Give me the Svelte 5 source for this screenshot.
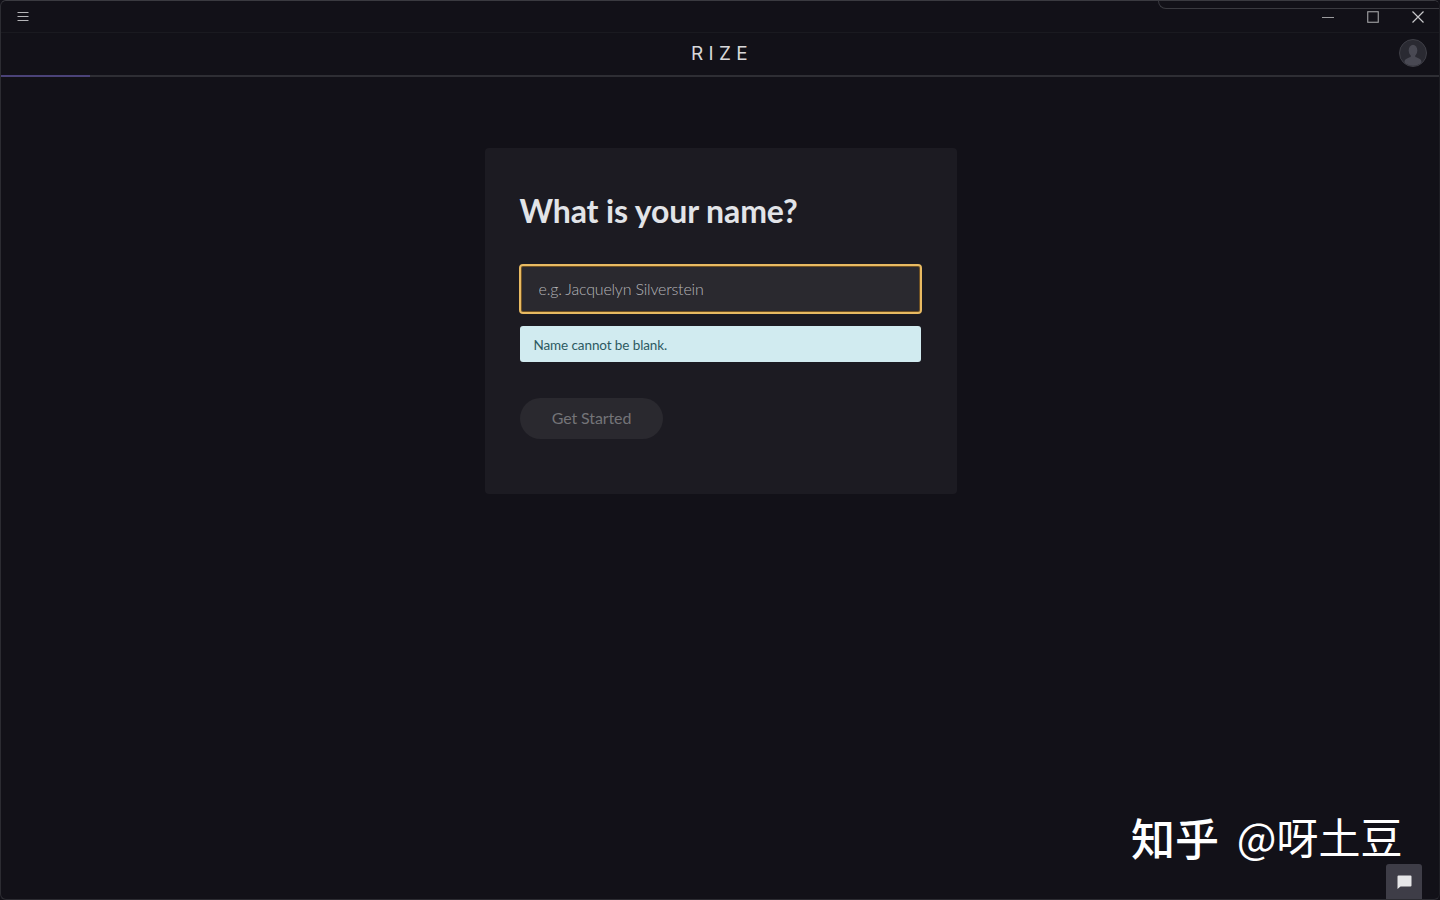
<script>
  let name = $state('');
</script>

<div class="window">
  <div class="notch"></div>
  <div class="titlebar">
    <button class="menu" aria-label="Menu">
      <svg width="12" height="12" viewBox="0 0 12 12"><path d="M0.5 1.5h11M0.5 5.5h11M0.5 9.5h11" stroke="#b5b5b8" stroke-width="1.2" fill="none"/></svg>
    </button>
    <div class="controls">
      <svg width="12" height="12" viewBox="0 0 12 12"><path d="M0 6.500h12" stroke="#9b9b9e" stroke-width="1.2"/></svg>
      <svg width="12" height="12" viewBox="0 0 12 12"><rect x="0.75" y="0.75" width="10.5" height="10.5" stroke="#a5a5a8" stroke-width="1.1" fill="none"/></svg>
      <svg width="12" height="12" viewBox="0 0 12 12"><path d="M0.5 0.5l11 11M11.5 0.5l-11 11" stroke="#c8c8ca" stroke-width="1.2" fill="none"/></svg>
    </div>
  </div>

  <header class="header">
    <div class="logo">RIZE</div>
    <div class="avatar">
      <svg width="28" height="28" viewBox="0 0 28 28">
        <circle cx="14" cy="14" r="13.500" fill="#2a2a32" stroke="#3f3f47" stroke-width="1"/>
        <clipPath id="av"><circle cx="14" cy="14" r="12.800"/></clipPath>
        <g clip-path="url(#av)" fill="#494953">
          <ellipse cx="14" cy="11.500" rx="4.300" ry="5.800"/>
          <path d="M11.700 15.500h4.600v2.400c2.600 1 6.200 1.800 6.200 5V28h-17v-5.100c0-3.200 3.600-4 6.200-5z"/>
        </g>
      </svg>
    </div>
  </header>
  <div class="progress"><div class="bar"></div></div>

  <main class="main">
    <section class="card">
      <h1>What is your name?</h1>
      <input class="field" type="text" placeholder="e.g. Jacquelyn Silverstein" bind:value={name} />
      <div class="alert">Name cannot be blank.</div>
      <button class="start" disabled>Get Started</button>
    </section>
  </main>

  <div class="watermark"><span class="zh">知乎</span> <span class="at">@呀土豆</span></div>
  <button class="chat" aria-label="Chat">
    <svg width="15" height="14" viewBox="0 0 15 14"><path d="M1.500 0.500h12a1 1 0 0 1 1 1v9a1 1 0 0 1-1 1H3.500L.5 14V1.500a1 1 0 0 1 1-1z" fill="#e6e6e8"/></svg>
  </button>
</div>

<style>
  :global(body) {
    margin: 0;
    background: #121118;
  }
  .window {
    position: relative;
    width: 1440px;
    height: 900px;
    box-sizing: border-box;
    overflow: hidden;
    background: #121118;
    border-top: 1px solid #3a3a40;
    border-left: 1px solid #2c2c32;
    border-right: 1px solid #1e1e24;
    border-bottom: 1px solid #2c2c32;
    border-radius: 6px;
    display: flex;
    flex-direction: column;
    font-family: Lato, "Noto Sans", sans-serif;
  }
  .notch {
    position: absolute;
    top: -1px;
    left: 1157px;
    right: 0;
    height: 9px;
    background: #121118;
    border-left: 1px solid #3a3a40;
    border-bottom: 1px solid #3a3a40;
    border-bottom-left-radius: 8px;
    box-sizing: border-box;
  }
  .titlebar {
    height: 32px;
    flex: none;
    display: flex;
    align-items: center;
    justify-content: space-between;
    padding: 0 15px 0 16px;
    box-sizing: border-box;
    border-bottom: 1px solid #1a1a20;
  }
  .menu {
    background: none;
    border: 0;
    padding: 0;
    display: flex;
  }
  .controls {
    display: flex;
    gap: 33px;
    align-items: center;
    padding-top: 1px;
  }
  .header {
    height: 42px;
    flex: none;
    position: relative;
    display: flex;
    align-items: center;
    justify-content: center;
  }
  .logo {
    font-family: Inter, "Open Sans", sans-serif;
    font-weight: 400;
    font-size: 19px;
    line-height: 22px;
    letter-spacing: 5.300px;
    color: #d8d8da;
    margin-left: 4px;
  }
  .avatar {
    position: absolute;
    right: 12px;
    top: 6px;
    width: 28px;
    height: 28px;
  }
  .progress {
    height: 2px;
    flex: none;
    background: #2e2e34;
  }
  .bar {
    width: 89px;
    height: 100%;
    background: #4a4278;
  }
  .main {
    flex: 1;
    display: flex;
    justify-content: center;
    align-items: flex-start;
    padding-top: 71px;
    padding-left: 1px;
  }
  .card {
    width: 472px;
    height: 346px;
    box-sizing: border-box;
    padding: 35px 35px 0;
    background: #1c1b22;
    border-radius: 4px;
    display: flex;
    flex-direction: column;
    align-items: flex-start;
  }
  h1 {
    margin: 0;
    font-size: 32px;
    line-height: 56px;
    font-weight: 700;
    letter-spacing: -0.12px;
    color: #e2e4e8;
  }
  .field {
    margin-top: 25px;
    width: 403px;
    height: 50px;
    margin-left: -1px;
    box-sizing: border-box;
    background: #2a292f;
    border: 2px solid #e8ba62;
    box-shadow: inset 0 0 0 1px rgba(170, 115, 25, 0.55);
    border-radius: 4px;
    outline: none;
    padding: 0 17px 2px 18px;
    font-family: Lato, sans-serif;
    font-size: 16px;
    font-weight: 300;
    letter-spacing: -0.2px;
    color: #e4e6ea;
  }
  .field::placeholder {
    color: #b4b4b8;
    opacity: 1;
  }
  .alert {
    margin-top: 12px;
    width: 401px;
    height: 36px;
    box-sizing: border-box;
    padding: 1px 14px 0;
    display: flex;
    align-items: center;
    background: #d1ebf0;
    border-radius: 3px;
    color: #2d5a62;
    font-size: 13.500px;
    letter-spacing: -0.1px;
  }
  .start {
    margin-top: 36px;
    width: 143px;
    height: 41px;
    border: 0;
    border-radius: 21px;
    background: #2a292f;
    color: #747478;
    font-family: Lato, sans-serif;
    font-size: 16px;
    letter-spacing: -0.1px;
    padding: 0 0 3px 1px;
  }
  .watermark {
    position: absolute;
    left: 1130px;
    top: 805px;
    font-family: "Noto Sans CJK SC", sans-serif;
    font-size: 44px;
    line-height: 60px;
    color: #fff;
    white-space: pre;
  }
  .zh {
    font-weight: 500;
  }
  .at {
    font-size: 42px;
    margin-left: 8px;
    vertical-align: 2px;
  }
  .chat {
    position: absolute;
    left: 1385px;
    top: 863px;
    width: 36px;
    height: 36px;
    padding: 0;
    border: 0;
    border-radius: 3px 3px 0 0;
    background: #3e3d47;
    display: flex;
    align-items: center;
    justify-content: center;
  }
</style>
